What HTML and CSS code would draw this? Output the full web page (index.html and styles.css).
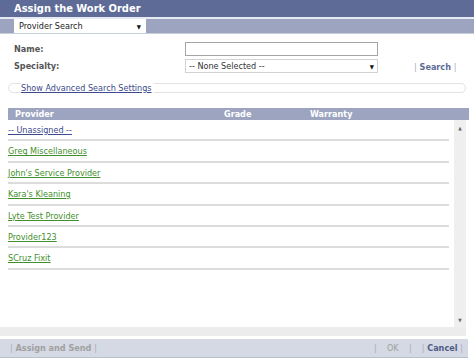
FILE: index.html
```html
<!DOCTYPE html>
<html lang="en">
  <head>
    <meta charset="utf-8">
    <title>Assign the Work Order</title>
    <link rel="stylesheet" href="styles.css">
  </head>
  <body>
    <div class="dialog">
      <div class="titlebar">Assign the Work Order</div>
      <div class="toolbar">
        <div class="mode-select">
          <span>Provider Search</span>
          <span class="arrow">&#9660;</span>
        </div>
      </div>

      <div class="search-form">
        <div class="form-row">
          <label class="form-label">Name:</label>
          <input class="text-input" type="text">
        </div>
        <div class="form-row">
          <label class="form-label">Specialty:</label>
          <div class="select-input">
            <span>-- None Selected --</span>
            <span class="arrow">&#9660;</span>
          </div>
          <a class="search-link" href="#"><span class="pipe">|</span> Search <span class="pipe">|</span></a>
        </div>
      </div>

      <div class="advanced">
        <a href="#">Show Advanced Search Settings</a>
      </div>

      <div class="grid">
        <div class="grid-head">
          <span class="col-provider">Provider</span>
          <span class="col-grade">Grade</span>
          <span class="col-warranty">Warranty</span>
        </div>
        <div class="grid-body">
          <div class="rows">
            <div class="row"><a class="unassigned" href="#">-- Unassigned -- </a></div>
            <div class="row"><a href="#">Greg Miscellaneous </a></div>
            <div class="row"><a href="#">John's Service Provider </a></div>
            <div class="row"><a href="#">Kara's Kleaning </a></div>
            <div class="row"><a href="#">Lyte Test Provider </a></div>
            <div class="row"><a href="#">Provider123 </a></div>
            <div class="row"><a href="#">SCruz Fixit </a></div>
          </div>
          <div class="scrollbar">
            <span class="scroll-up">&#9650;</span>
            <span class="scroll-down">&#9660;</span>
          </div>
        </div>
        <div class="grid-foot"></div>
      </div>

      <div class="footer">
        <span class="btn disabled"><span class="pipe">|</span> Assign and Send <span class="pipe">|</span></span>
        <span class="spacer"></span>
        <span class="btn disabled ok"><span class="pipe">|</span>&nbsp;&nbsp;&nbsp; OK &nbsp;&nbsp;&nbsp;<span class="pipe">|</span></span>
        <span class="btn cancel"><span class="pipe">|</span> Cancel <span class="pipe">|</span></span>
      </div>
    </div>
  </body>
</html>
```

FILE: styles.css
```css
body {
  margin: 0;
  padding: 0;
  background: #fff;
  font-family: "DejaVu Sans Condensed", "DejaVu Sans", Verdana, sans-serif;
  font-size: 9px;
  color: #333;
}

.dialog {
  width: 474px;
  height: 361px;
  display: flex;
  flex-direction: column;
}

.titlebar {
  height: 17px;
  line-height: 17px;
  background: #5d6b96;
  color: #fff;
  font-weight: bold;
  font-size: 11px;
  padding-left: 14px;
  border-bottom: 2px solid #e6eaf2;
}

.toolbar {
  height: 14px;
  background: #9ca4bf;
  padding-left: 14px;
  border-bottom: 1px solid #c9cedc;
}

.mode-select {
  width: 122px;
  height: 14px;
  background: #fff;
  display: flex;
  align-items: center;
  justify-content: space-between;
  padding: 0 5px;
  color: #222;
}

.arrow {
  font-size: 6px;
  color: #111;
}

.search-form {
  padding: 8px 14px 0 14px;
  display: flex;
  flex-direction: column;
  gap: 3px;
}

.form-row {
  display: flex;
  align-items: center;
  height: 14px;
}

.form-label {
  width: 171px;
  font-weight: bold;
  color: #555;
}

.text-input {
  width: 193px;
  height: 14px;
  box-sizing: border-box;
  border: 1px solid #a5a5a5;
  margin: 0;
  padding: 0;
}

.select-input {
  width: 193px;
  height: 14px;
  box-sizing: border-box;
  border: 1px solid #d2d2d2;
  display: flex;
  align-items: center;
  justify-content: space-between;
  padding: 0 3px 0 3px;
  color: #333;
}

.search-link {
  margin-left: 36px;
  margin-top: 1px;
  color: #5d6b96;
  font-weight: bold;
  text-decoration: none;
  white-space: nowrap;
}

.pipe {
  color: #aab;
  font-weight: normal;
}

.advanced {
  margin: 10px 8px 0 8px;
  height: 8px;
  border: 1px solid #e2e2e2;
  border-radius: 5px;
  padding-left: 12px;
  display: flex;
  align-items: center;
}

.advanced a {
  color: #3d4a8c;
  background: #fff;
  padding: 0 2px 0 0;
  text-decoration: underline;
}

.grid {
  margin: 15px 5px 0 8px;
  display: flex;
  flex-direction: column;
}

.grid-head {
  height: 12px;
  background: #9ca4bf;
  color: #fff;
  font-weight: bold;
  display: flex;
  align-items: center;
}

.col-provider {
  width: 209px;
  padding-left: 7px;
}

.col-grade {
  width: 86px;
}

.grid-body {
  height: 207px;
  display: flex;
}

.rows {
  flex: 1;
  padding-right: 5px;
}

.row {
  height: 17.4px;
  padding-top: 2px;
  line-height: 17px;
  border-bottom: 2px solid #dcdcdc;
}

.row a {
  color: #3f8f2c;
  text-decoration: underline;
}

.row a.unassigned {
  color: #3d4a8c;
}

.scrollbar {
  width: 12px;
  margin-right: 3px;
  background: #efefef;
  display: flex;
  flex-direction: column;
  justify-content: space-between;
  align-items: center;
  font-size: 5px;
  color: #666;
  padding: 5px 0 4px 0;
}

.grid-foot {
  height: 9px;
  background: #ececec;
  margin-left: -8px;
  margin-right: 3px;
}

.footer {
  margin-top: 3px;
  height: 19px;
  width: 468px;
  padding-left: 5px;
  box-sizing: border-box;
  background: #d5d9e3;
  display: flex;
  align-items: center;
  font-weight: bold;
  font-size: 9px;
  border-bottom: 1px solid #b9bfcf;
}

.btn {
  padding: 0 5px;
  color: #4d5b86;
}

.btn.disabled {
  color: #a0a0a0;
}

.btn.ok {
  font-weight: normal;
  margin-right: 0;
}

.spacer {
  flex: 1;
}
```
